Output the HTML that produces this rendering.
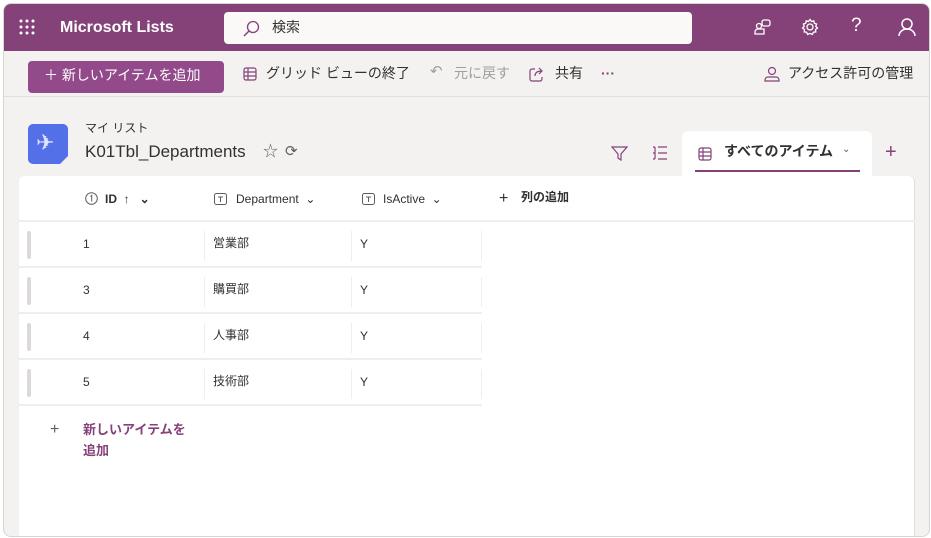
<!DOCTYPE html>
<html><head><meta charset="utf-8">
<style>
*{box-sizing:border-box;margin:0;padding:0}
body{width:931px;height:538px;background:#fff;font-family:"Liberation Sans","Noto Sans CJK JP",sans-serif;overflow:hidden;position:relative;color:#323130}
.win{position:absolute;left:3px;top:3px;width:927px;height:534px;border-radius:8px;background:#f3f2f1;overflow:hidden;border:1px solid #d8d6d4}
.hdr{position:absolute;left:0;top:0;width:100%;height:47px;background:#854279}
.abs{position:absolute}
.t{position:absolute;white-space:nowrap;line-height:1.2}
.tb{position:absolute;top:47px;left:0;width:100%;height:46px;border-bottom:1px solid #e1dfdd}
.card{position:absolute;left:15px;top:172px;width:896px;height:370px;background:#fff;border-radius:6px;border-right:1px solid #e1dfdd}
.row{position:absolute;left:0;width:463px;height:46px;border-bottom:2px solid #efeeed}
.cell{position:absolute;top:9px;height:30px;border-left:1px solid #efeeed}
.grip{position:absolute;left:8px;top:9px;width:4px;height:28px;background:#dcdad8;border-radius:2px}
.txt{font-size:12px;color:#323130}
</style></head><body>
<div class="win">
 <div class="hdr">
  <svg class="abs" style="left:15px;top:15px" width="16" height="16"><g fill="#fff"><circle cx="2" cy="2" r="1.5"/><circle cx="8" cy="2" r="1.5"/><circle cx="14" cy="2" r="1.5"/><circle cx="2" cy="8" r="1.5"/><circle cx="8" cy="8" r="1.5"/><circle cx="14" cy="8" r="1.5"/><circle cx="2" cy="14" r="1.5"/><circle cx="8" cy="14" r="1.5"/><circle cx="14" cy="14" r="1.5"/></g></svg>
  <div class="t" style="left:56px;top:14px;color:#fff;font-size:16px;font-weight:bold">Microsoft Lists</div>
  <div class="abs" style="left:220px;top:8px;width:468px;height:32px;background:#faf9f8;border-radius:4px"></div>
  <svg class="abs" style="left:238px;top:16px" width="18" height="18"><circle cx="11" cy="7" r="5.5" fill="none" stroke="#854279" stroke-width="1.3"/><path d="M7 11 L2 16" stroke="#854279" stroke-width="1.5"/></svg>
  <div class="t" style="left:268px;top:15px;font-size:14px;color:#323130">検索</div>
  <svg class="abs" style="left:750px;top:14px" width="18" height="18" fill="none" stroke="#fff" stroke-width="1.3"><rect x="8" y="2" width="8" height="6" rx="2"/><circle cx="5" cy="8" r="2.5"/><path d="M1 16 v-2 a3 3 0 0 1 3-3 h6 v5z"/></svg>
  <svg class="abs" style="left:797px;top:14px" width="18" height="18" fill="none" stroke="#fff" stroke-width="1.3"><circle cx="9" cy="9" r="3"/><path d="M9 1.5 l1.5 2 2.3-.7 .5 2.4 2.3.8-.8 2.3 1.7 1.7-2 1.5.3 2.4-2.4.3-1 2.2-2.4-1-2.4 1-1-2.2-2.4-.3.3-2.4-2-1.5 1.7-1.7-.8-2.3 2.3-.8.5-2.4 2.3.7z"/></svg>
  <div class="t" style="left:847px;top:11px;color:#fff;font-size:19px">?</div>
  <svg class="abs" style="left:893px;top:13px" width="20" height="20" fill="none" stroke="#fff" stroke-width="1.5"><circle cx="10" cy="7" r="5"/><path d="M2 19 a8 7 0 0 1 16 0"/></svg>
 </div>
 <div class="tb">
  <div class="abs" style="left:24px;top:10px;width:196px;height:32px;background:#924a8a;border-radius:4px"></div>
  <div class="t" style="left:40px;top:16px;color:#fff;font-size:14px">＋ 新しいアイテムを追加</div>
  <svg class="abs" style="left:239px;top:16px" width="14" height="14" fill="none" stroke="#854279" stroke-width="1.2"><rect x="1" y="1" width="12" height="12" rx="2"/><path d="M1 5h12M1 9h12M5 1v12"/></svg>
  <div class="t" style="left:262px;top:14px;font-size:14px">グリッド ビューの終了</div>
  <div class="t" style="left:426px;top:12px;font-size:15px;color:#a19f9d">↶</div>
  <div class="t" style="left:450px;top:14px;font-size:14px;color:#a19f9d">元に戻す</div>
  <svg class="abs" style="left:525px;top:15px" width="16" height="16" fill="none" stroke="#854279" stroke-width="1.2"><path d="M6 3H3a2 2 0 0 0-2 2v8a2 2 0 0 0 2 2h8a2 2 0 0 0 2-2v-2"/><path d="M6 10c0-4 3-5 7-5M10 2l3 3-3 3"/></svg>
  <div class="t" style="left:551px;top:14px;font-size:14px">共有</div>
  <div class="t" style="left:597px;top:14px;font-size:14px;color:#854279;font-weight:bold">···</div>
  <svg class="abs" style="left:760px;top:15px" width="16" height="16" fill="none" stroke="#854279" stroke-width="1.2"><circle cx="8" cy="5" r="3.5"/><path d="M1 15v-1a3 3 0 0 1 3-3h8a3 3 0 0 1 3 3v1z"/></svg>
  <div class="t" style="left:784px;top:14px;font-size:14px">アクセス許可の管理</div>
 </div>
 <div class="abs" style="left:24px;top:120px;width:40px;height:40px;background:#5470e8;border-radius:5px;clip-path:polygon(0 0,100% 0,100% 80%,80% 100%,0 100%)"></div>
 <div class="t" style="left:32px;top:126px;color:#dfe5ff;font-size:22px">✈</div>
 <div class="t" style="left:81px;top:117px;font-size:12px">マイ リスト</div>
 <div class="t" style="left:81px;top:138px;font-size:17px">K01Tbl_Departments</div>
 <div class="t" style="left:259px;top:139px;font-size:15px;color:#605e5c">☆</div>
 <div class="t" style="left:281px;top:139px;font-size:15px;color:#605e5c">⟳</div>
 <svg class="abs" style="left:607px;top:141px" width="17" height="17" fill="none" stroke="#854279" stroke-width="1.2"><path d="M1 2h15l-6 7v6l-3-2V9z"/></svg>
 <svg class="abs" style="left:648px;top:141px" width="16" height="16" fill="none" stroke="#854279" stroke-width="1.2"><path d="M1 2h2M1 8h2M1 14h2M6 2h9M6 8h9M6 14h9M3 2v12"/></svg>
 <div class="abs" style="left:678px;top:127px;width:190px;height:50px;background:#fff;border-radius:6px 6px 0 0"></div>
 <svg class="abs" style="left:694px;top:143px" width="14" height="14" fill="none" stroke="#854279" stroke-width="1.2"><rect x="1" y="1" width="12" height="12" rx="2"/><path d="M1 5h12M1 9h12M5 1v12"/></svg>
 <div class="t" style="left:720px;top:139px;font-size:14px;font-weight:bold">すべてのアイテム</div>
 <div class="t" style="left:838px;top:140px;font-size:10px;color:#605e5c">⌄</div>
 <div class="abs" style="left:691px;top:166px;width:165px;height:2px;background:#854279"></div>
 <div class="t" style="left:881px;top:136px;font-size:20px;color:#854279;font-weight:300">+</div>
 <div class="card">
  <svg class="abs" style="left:66px;top:16px" width="13" height="13" fill="none" stroke="#605e5c"><circle cx="6.5" cy="6.5" r="5.8"/><path d="M5.5 4.5l1.2-1v6"/></svg>
  <div class="t txt" style="left:86px;top:16px;font-weight:bold">ID&nbsp; ↑ &nbsp;&nbsp;⌄</div>
  <svg class="abs" style="left:195px;top:17px" width="13" height="12" fill="none" stroke="#605e5c"><rect x=".5" y=".5" width="12" height="11" rx="2"/><path d="M4 4h5M6.5 4v5"/></svg>
  <div class="t txt" style="left:217px;top:16px">Department&nbsp; ⌄</div>
  <svg class="abs" style="left:343px;top:17px" width="13" height="12" fill="none" stroke="#605e5c"><rect x=".5" y=".5" width="12" height="11" rx="2"/><path d="M4 4h5M6.5 4v5"/></svg>
  <div class="t txt" style="left:364px;top:16px">IsActive&nbsp; ⌄</div>
  <div class="t txt" style="left:480px;top:13px;font-size:16px">+</div>
  <div class="t txt" style="left:502px;top:14px;font-weight:bold">列の追加</div>
  <div class="abs" style="left:0;top:44px;width:896px;height:2px;background:#efeeed"></div>
  <div class="row" style="top:46px"><div class="grip"></div><div class="t txt" style="left:64px;top:15px">1</div><div class="cell" style="left:185px"></div><div class="t txt" style="left:194px;top:14px">営業部</div><div class="cell" style="left:332px"></div><div class="t txt" style="left:341px;top:15px">Y</div><div class="cell" style="left:462px"></div></div>
  <div class="row" style="top:92px"><div class="grip"></div><div class="t txt" style="left:64px;top:15px">3</div><div class="cell" style="left:185px"></div><div class="t txt" style="left:194px;top:14px">購買部</div><div class="cell" style="left:332px"></div><div class="t txt" style="left:341px;top:15px">Y</div><div class="cell" style="left:462px"></div></div>
  <div class="row" style="top:138px"><div class="grip"></div><div class="t txt" style="left:64px;top:15px">4</div><div class="cell" style="left:185px"></div><div class="t txt" style="left:194px;top:14px">人事部</div><div class="cell" style="left:332px"></div><div class="t txt" style="left:341px;top:15px">Y</div><div class="cell" style="left:462px"></div></div>
  <div class="row" style="top:184px"><div class="grip"></div><div class="t txt" style="left:64px;top:15px">5</div><div class="cell" style="left:185px"></div><div class="t txt" style="left:194px;top:14px">技術部</div><div class="cell" style="left:332px"></div><div class="t txt" style="left:341px;top:15px">Y</div><div class="cell" style="left:462px"></div></div>
  <div class="t" style="left:31px;top:244px;font-size:16px;color:#605e5c">+</div>
  <div class="t" style="left:64px;top:243px;font-size:13px;color:#854279;font-weight:bold;line-height:21px">新しいアイテムを<br>追加</div>
 </div>
</div>
</body></html>
